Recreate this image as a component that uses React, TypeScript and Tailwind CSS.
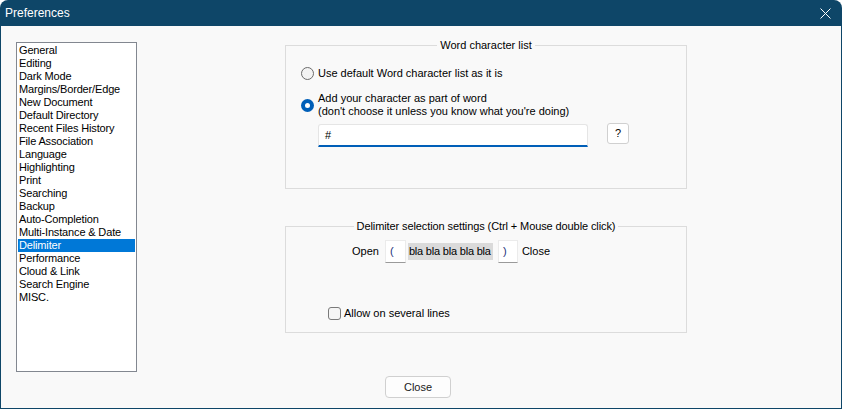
import React from 'react';

const categories = [
  'General',
  'Editing',
  'Dark Mode',
  'Margins/Border/Edge',
  'New Document',
  'Default Directory',
  'Recent Files History',
  'File Association',
  'Language',
  'Highlighting',
  'Print',
  'Searching',
  'Backup',
  'Auto-Completion',
  'Multi-Instance & Date',
  'Delimiter',
  'Performance',
  'Cloud & Link',
  'Search Engine',
  'MISC.',
];

const Radio: React.FC<{ checked?: boolean }> = ({ checked }) =>
  checked ? (
    <span className="w-[13px] h-[13px] rounded-full bg-[#005fb8] flex items-center justify-center shrink-0">
      <span className="w-[5px] h-[5px] rounded-full bg-white" />
    </span>
  ) : (
    <span className="w-[13px] h-[13px] rounded-full border border-[#6b6b6b] bg-[#f3f3f3] shrink-0" />
  );

const App: React.FC = () => {
  const selected = 'Delimiter';

  return (
    <div
      className="w-[842px] h-[409px] flex flex-col bg-[#0e4668] rounded-t-[8px] overflow-hidden text-[11px] leading-[13px] text-black"
      style={{ fontFamily: '"Liberation Sans", Arial, sans-serif' }}
    >
      {/* Title bar */}
      <div className="h-[26px] shrink-0 flex items-center justify-between pl-[5px] pr-[11px] text-white">
        <span className="text-[12px]">Preferences</span>
        <svg width="11" height="11" viewBox="0 0 11 11" className="mt-[1px]">
          <path d="M0.5 0.5 L10.5 10.5 M10.5 0.5 L0.5 10.5" stroke="white" strokeWidth="1" />
        </svg>
      </div>

      {/* Body */}
      <div className="flex-1 bg-[#f9f9f9] mx-[1px] mb-[1px] pt-[13px]">
        <div className="flex items-start">
          {/* Category list */}
          <div className="ml-[15px] mt-[3px] w-[121px] h-[330px] border border-[#828790] bg-white p-[1px] tracking-[-0.15px]">
            {categories.map((c) => (
              <div
                key={c}
                className={`h-[13px] pl-[1px] whitespace-nowrap ${
                  c === selected ? 'bg-[#0078d7] text-white' : ''
                }`}
              >
                {c}
              </div>
            ))}
          </div>

          {/* Settings column */}
          <div className="ml-[148px] flex flex-col">
            <fieldset className="w-[402px] h-[150px] border border-[#dcdcdc]">
              <legend className="mx-auto px-[3px] leading-[13px]">Word character list</legend>
              <div className="pl-[15px] pt-[15px] flex flex-col">
                <label className="flex items-center gap-[4px]">
                  <Radio />
                  <span>Use default Word character list as it is</span>
                </label>
                <label className="flex items-center gap-[4px] mt-[12px]">
                  <Radio checked />
                  <span>
                    Add your character as part of word
                    <br />
                    (don't choose it unless you know what you're doing)
                  </span>
                </label>
                <div className="flex items-start mt-[6px] ml-[17px]">
                  <div className="w-[270px] h-[23px] bg-white border border-[#e5e5e5] border-b-2 border-b-[#005fb8] rounded-t-[3px] flex items-center pl-[6px]">
                    #
                  </div>
                  <button className="ml-[19px] -mt-[1px] w-[22px] h-[21px] bg-white border border-[#d0d0d0] rounded-[3px] flex items-center justify-center">
                    ?
                  </button>
                </div>
              </div>
            </fieldset>

            <fieldset className="mt-[31px] w-[402px] h-[113px] border border-[#dcdcdc]">
              <legend className="mx-auto px-[3px] leading-[13px] tracking-[-0.1px]">
                Delimiter selection settings (Ctrl + Mouse double click)
              </legend>
              <div className="flex items-center mt-[7px] ml-[66px]">
                <span>Open</span>
                <div className="ml-[6px] w-[21px] h-[23px] bg-white border border-[#ebebeb] border-b-[#9a9a9a] pl-[4px] pt-[4px] text-[#1c2f7a]">
                  (
                </div>
                <span className="ml-[2px] w-[85px] h-[17px] bg-[#dadada] flex items-center pl-[1px] whitespace-nowrap tracking-[-0.2px]">
                  bla bla bla bla bla
                </span>
                <div className="ml-[5px] w-[20px] h-[23px] bg-white border border-[#ebebeb] border-b-[#9a9a9a] pl-[4px] pt-[4px] text-[#1c2f7a]">
                  )
                </div>
                <span className="ml-[4px]">Close</span>
              </div>
              <label className="flex items-center gap-[3px] mt-[44px] ml-[42px]">
                <span className="w-[13px] h-[13px] rounded-[3px] border border-[#7a7a7a] bg-[#f5f5f5]" />
                <span>Allow on several lines</span>
              </label>
            </fieldset>
          </div>
        </div>

        <button className="mt-[4px] ml-[384px] w-[66px] h-[22px] bg-[#fdfdfd] border border-[#d0d0d0] rounded-[4px] flex items-center justify-center text-[#1a1a1a]">
          Close
        </button>
      </div>
    </div>
  );
};

export default App;
